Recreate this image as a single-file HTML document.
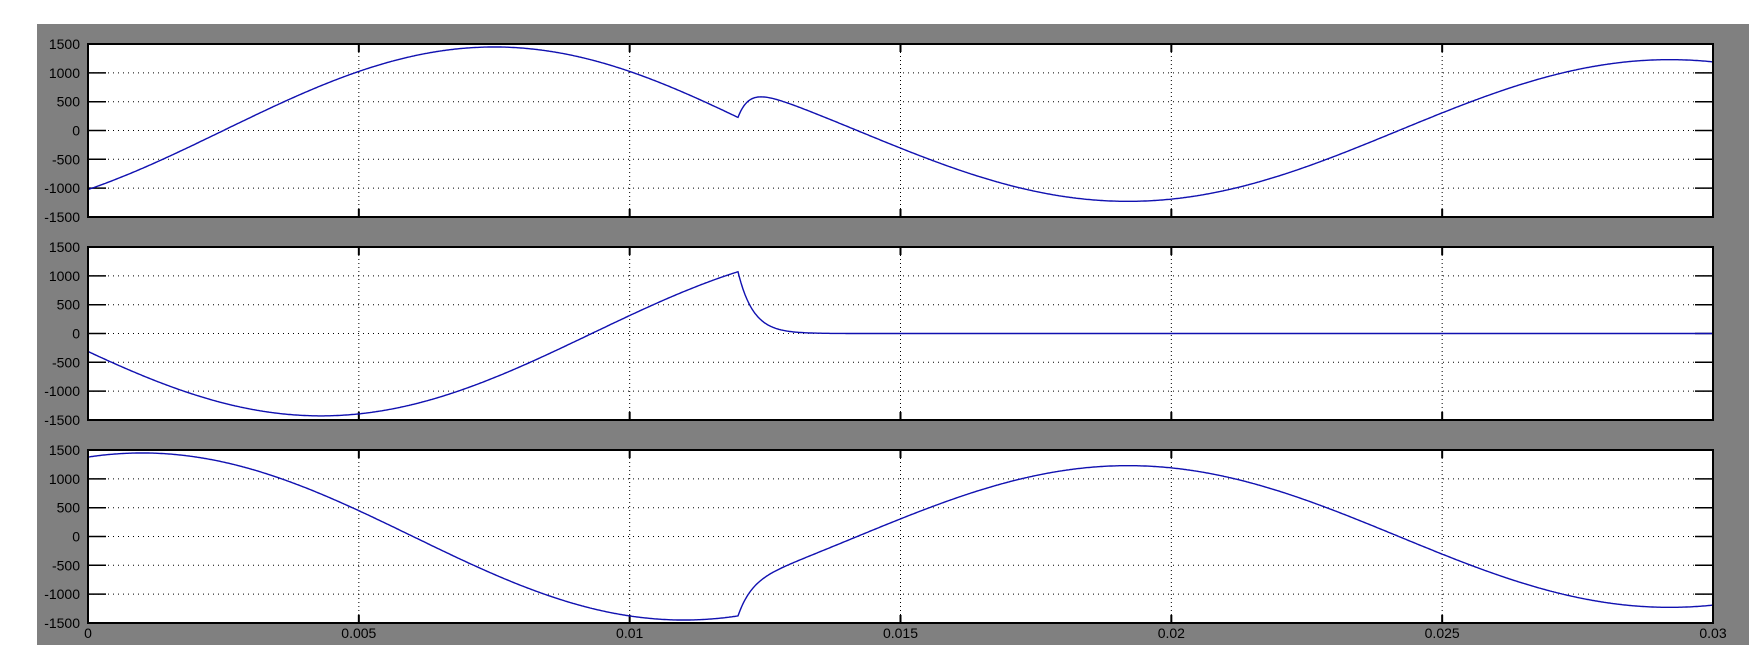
<!DOCTYPE html>
<html><head><meta charset="utf-8"><style>
html,body{margin:0;padding:0;background:#fff;width:1759px;height:645px;overflow:hidden}
svg{display:block}
text{font-family:"Liberation Sans",sans-serif;font-size:14px;fill:#000}
</style></head><body>
<svg id="s" width="1759" height="645" xmlns="http://www.w3.org/2000/svg">
<rect x="37" y="24" width="1712" height="621" fill="#808080"/>
</svg>
<script>
(function(){
var s=document.getElementById('s'),NS='http://www.w3.org/2000/svg';
function el(n,a,t){var e=document.createElementNS(NS,n);for(var k in a)e.setAttribute(k,a[k]);if(t!=null)e.textContent=t;s.appendChild(e);return e;}
var X0=88,X1=1713,W=X1-X0,tops=[44,247,450],H=173,sc=28.8/500;
var P=2*Math.PI*50;
function f1(t){var pre=1450*Math.sin(P*(t-0.0025));if(t<=0.012)return pre;var post=1230*Math.sin(P*(t-0.0242));var d=1230*Math.sin(P*(0.012-0.0242))-1450*Math.sin(P*(0.0095));return post-d*Math.exp(-(t-0.012)/0.0002);}
function f2(t){if(t<=0.012)return 1430*Math.sin(P*(t-0.0093));var v0=1430*Math.sin(P*(0.012-0.0093));return v0*Math.exp(-(t-0.012)/0.00028);}
function f3(t){var pre=1450*Math.sin(P*(t+0.004));if(t<=0.012)return pre;var post=1230*Math.sin(P*(t-0.0142));var d=1230*Math.sin(P*(0.012-0.0142))-1450*Math.sin(P*(0.016));return post-d*Math.exp(-(t-0.012)/0.00025);}
var fs=[f1,f2,f3];
for(var p=0;p<3;p++){
 var tp=tops[p],cy=tp+H/2;
 el('rect',{x:X0,y:tp,width:W,height:H,fill:'#fff'});
 for(var i=-3;i<=3;i++){
  var y=cy-i*500*sc;
  if(i>-3&&i<3){el('line',{x1:X0,x2:X1,y1:y,y2:y,stroke:'#000','stroke-width':1,'stroke-dasharray':'1,4'});
   el('line',{x1:X0,x2:X0+18,y1:y,y2:y,stroke:'#000','stroke-width':1.5});
   el('line',{x1:X1-18,x2:X1,y1:y,y2:y,stroke:'#000','stroke-width':1.5});}
  el('text',{x:80,y:y+5,'text-anchor':'end'},String(i*500));
 }
 for(var j=1;j<6;j++){
  var x=X0+j*W/6;
  el('line',{x1:x,x2:x,y1:tp,y2:tp+H,stroke:'#000','stroke-width':1,'stroke-dasharray':'1,3'});
  el('line',{x1:x,x2:x,y1:tp,y2:tp+8,stroke:'#000','stroke-width':2});
  el('line',{x1:x,x2:x,y1:tp+H-8,y2:tp+H,stroke:'#000','stroke-width':2});
 }
 var d='';
 for(var k=0;k<=1625;k++){var t=k/1625*0.03;var v=fs[p](t);d+=(k?'L':'M')+(X0+k).toFixed(1)+','+(cy-v*sc).toFixed(1);}
 el('path',{d:d,fill:'none',stroke:'#1010b0','stroke-width':1.4});
 el('rect',{x:X0,y:tp,width:W,height:H,fill:'none',stroke:'#000','stroke-width':2});
}
var labs=['0','0.005','0.01','0.015','0.02','0.025','0.03'];
for(var j2=0;j2<7;j2++){el('text',{x:X0+j2*W/6,y:638,'text-anchor':'middle'},labs[j2]);}
})();
</script>
</body></html>
